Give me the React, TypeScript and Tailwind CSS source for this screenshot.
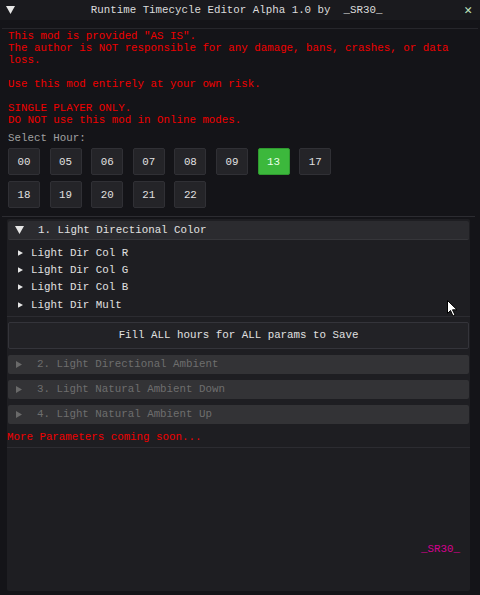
import React from 'react';

const hours = ['00', '05', '06', '07', '08', '09', '13', '17', '18', '19', '20', '21', '22'];
const activeHour = '13';

const warning = [
  'This mod is provided "AS IS".',
  'The author is NOT responsible for any damage, bans, crashes, or data',
  'loss.',
  '',
  'Use this mod entirely at your own risk.',
  '',
  'SINGLE PLAYER ONLY.',
  'DO NOT use this mod in Online modes.',
];

const params = ['Light Dir Col R', 'Light Dir Col G', 'Light Dir Col B', 'Light Dir Mult'];
const lockedHeaders = ['2. Light Directional Ambient', '3. Light Natural Ambient Down', '4. Light Natural Ambient Up'];

const TriDown = ({ color = '#e6e6e6' }: { color?: string }) => (
  <svg width="9" height="8" viewBox="0 0 9 8">
    <path d="M0 0 H9 L4.5 8 Z" fill={color} />
  </svg>
);

const TriRight = ({ size = 7, color = '#e6e6e6' }: { size?: number; color?: string }) => (
  <svg width={size} height={size + 1} viewBox="0 0 7 8">
    <path d="M0 0 L7 4 L0 8 Z" fill={color} />
  </svg>
);

export default function App() {
  return (
    <div
      className="relative w-[480px] h-[595px] overflow-hidden bg-[#141418] text-[10.8px] leading-[12px] whitespace-pre"
      style={{ fontFamily: '"Liberation Mono", "DejaVu Sans Mono", monospace' }}
    >
      {/* Title bar */}
      <div className="h-[20px] flex items-center bg-[#1a1a1e] px-[6px]">
        <TriDown />
        <span className="flex-1 text-center text-[#dcdcdc] pr-[6px]">Runtime Timecycle Editor Alpha 1.0 by  _SR30_</span>
        <span className="text-[#bfe3bf] text-[13px] leading-none pr-[2px]">✕</span>
      </div>
      <div className="h-[8px]" />
      <div className="h-px bg-[#26262b] mx-[2px]" />

      {/* Warning */}
      <div className="px-[8px] pt-[1px] text-[#f00000]">
        {warning.map((line, i) => (
          <div key={i} className="h-[12px]">{line}</div>
        ))}
      </div>

      <div className="px-[8px] mt-[6px] text-[#a0a0a0] h-[12px]">Select Hour:</div>

      {/* Hours */}
      <div className="px-[8px] mt-[4px] flex flex-wrap gap-x-[9.6px] gap-y-[6px] w-[340px]">
        {hours.map((h) => (
          <div
            key={h}
            className={
              h === activeHour
                ? 'w-[32px] h-[27px] flex items-center justify-center rounded-[2px] bg-[#3cb83c] border border-[#2f9a2f] text-[#e8ffe8]'
                : 'w-[32px] h-[27px] flex items-center justify-center rounded-[2px] bg-[#242428] border border-[#303035] text-[#e0e0e0]'
            }
          >
            {h}
          </div>
        ))}
      </div>

      <div className="mt-[8px] h-px bg-[#2c2c31] ml-[2px] mr-[5px]" />

      {/* Child region */}
      <div className="mt-[2px] ml-[7px] w-[463px] h-[372px] bg-[#1e1e22] rounded-[2px] pt-[2px] relative">
        <div className="mx-[1px] h-[19px] flex items-center bg-[#2b2b2f] rounded-[2px] border-b border-[#36363a] pl-[7px] text-[#e0e0e0]">
          <TriDown />
          <span className="ml-[14px]">1. Light Directional Color</span>
        </div>
        <div className="pt-[4px]">
          {params.map((p) => (
            <div key={p} className="h-[17.4px] flex items-center pl-[11px] text-[#e0e0e0]">
              <TriRight size={5} />
              <span className="ml-[8px]">{p}</span>
            </div>
          ))}
        </div>
        <div className="mt-[2px] h-px bg-[#2c2c31]" />

        <div className="mt-[5px] mx-[1px] h-[27px] flex items-center justify-center bg-[#222226] border border-[#34343a] rounded-[2px] text-[#e0e0e0]">
          Fill ALL hours for ALL params to Save
        </div>

        <div className="mt-[6px] flex flex-col gap-[6px]">
          {lockedHeaders.map((t) => (
            <div key={t} className="mx-[1px] h-[19px] flex items-center bg-[#333336] rounded-[2px] pl-[8px] text-[#6e6e6e]">
              <TriRight size={6} color="#6a6a6a" />
              <span className="ml-[15px]">{t}</span>
            </div>
          ))}
        </div>

        <div className="mt-[7px] h-[12px] text-[#f00000]">More Parameters coming soon...</div>
        <div className="mt-[4px] h-px bg-[#2c2c31]" />

        <div className="absolute right-[10px] bottom-[36px] text-[#d6008f]">_SR30_</div>
      </div>

      {/* Mouse cursor */}
      <svg className="absolute left-[447px] top-[300px]" width="11" height="17" viewBox="0 0 11 17">
        <path d="M0.5 0.5 L0.5 13.5 L3.5 10.5 L6 16 L8 15 L5.5 9.8 L10 9.8 Z" fill="#ffffff" stroke="#000000" strokeWidth="1" />
      </svg>
    </div>
  );
}
